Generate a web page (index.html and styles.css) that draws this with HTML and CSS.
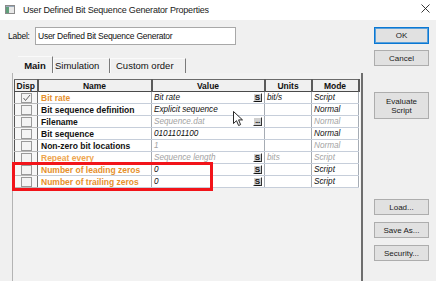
FILE: index.html
```html
<!DOCTYPE html>
<html>
<head>
<meta charset="utf-8">
<link rel="stylesheet" href="styles.css">
</head>
<body>
<div class="win">
  <div class="titlebar">
    <svg class="appicon" viewBox="0 0 10 9"><rect x="0.5" y="0.5" width="9" height="8" fill="#e8e8e8" stroke="#8a8a8a"/><rect x="1" y="2" width="3" height="6" fill="#5f9f7a"/><rect x="1" y="1" width="8" height="1" fill="#9ab"/></svg>
    <span class="title">User Defined Bit Sequence Generator Properties</span>
    <svg class="close" viewBox="0 0 9 9"><path d="M0.5 0.5 L8.5 8.5 M8.5 0.5 L0.5 8.5" stroke="#222" stroke-width="0.9"/></svg>
  </div>
  <div class="body">
    <div class="main">
      <div class="labelrow">
        <span class="lbl">Label:</span>
        <div class="input">User Defined Bit Sequence Generator</div>
      </div>
      <div class="tabs">
        <div class="tab sel">Main</div>
        <div class="tab sim">Simulation</div>
        <div class="tab cust">Custom order</div>
      </div>
      <div class="panel">
        <table class="grid">
          <colgroup><col class="c1"><col class="c2"><col class="c3"><col class="c4"><col class="c5"></colgroup>
          <thead>
            <tr><th>Disp</th><th>Name</th><th>Value</th><th>Units</th><th>Mode</th></tr>
          </thead>
          <tbody>
            <tr>
              <td class="disp"><span class="cb checked"><svg viewBox="0 0 9 8"><path d="M1.5 4 L3.5 6.5 L8 1" fill="none" stroke="#555" stroke-width="0.9"/></svg></span></td>
              <td class="nm orange">Bit rate</td>
              <td class="val"><div class="vc"><span>Bit rate</span><span class="sbtn">S</span></div></td>
              <td class="it">bit/s</td>
              <td class="it">Script</td>
            </tr>
            <tr>
              <td class="disp"><span class="cb"></span></td>
              <td class="nm">Bit sequence definition</td>
              <td class="val"><div class="vc"><span>Explicit sequence</span></div></td>
              <td class="it"></td>
              <td class="it">Normal</td>
            </tr>
            <tr>
              <td class="disp"><span class="cb"></span></td>
              <td class="nm">Filename</td>
              <td class="val grey"><div class="vc"><span>Sequence.dat</span><span class="sbtn dots">...</span></div></td>
              <td class="it"></td>
              <td class="it grey">Normal</td>
            </tr>
            <tr>
              <td class="disp"><span class="cb"></span></td>
              <td class="nm">Bit sequence</td>
              <td class="val"><div class="vc"><span>0101101100</span></div></td>
              <td class="it"></td>
              <td class="it">Normal</td>
            </tr>
            <tr>
              <td class="disp"><span class="cb"></span></td>
              <td class="nm">Non-zero bit locations</td>
              <td class="val grey"><div class="vc"><span>1</span></div></td>
              <td class="it"></td>
              <td class="it grey">Normal</td>
            </tr>
            <tr>
              <td class="disp"><span class="cb"></span></td>
              <td class="nm orange light">Repeat every</td>
              <td class="val grey"><div class="vc"><span>Sequence length</span><span class="sbtn">S</span></div></td>
              <td class="it grey">bits</td>
              <td class="it grey">Script</td>
            </tr>
            <tr>
              <td class="disp"><span class="cb"></span></td>
              <td class="nm orange">Number of leading zeros</td>
              <td class="val"><div class="vc"><span>0</span><span class="sbtn">S</span></div></td>
              <td class="it"></td>
              <td class="it">Script</td>
            </tr>
            <tr>
              <td class="disp"><span class="cb"></span></td>
              <td class="nm orange">Number of trailing zeros</td>
              <td class="val"><div class="vc"><span>0</span><span class="sbtn">S</span></div></td>
              <td class="it"></td>
              <td class="it">Script</td>
            </tr>
          </tbody>
        </table>
      </div>
    </div>
    <div class="buttons">
      <div class="btn ok">OK</div>
      <div class="btn cancel">Cancel</div>
      <div class="btn eval">Evaluate<br>Script</div>
      <div class="btn load">Load...</div>
      <div class="btn save">Save As...</div>
      <div class="btn sec">Security...</div>
    </div>
  </div>
  <div class="highlight"></div>
  <svg class="cursor" viewBox="0 0 11 16"><path d="M0.5 0.5 L0.5 12.5 L3.5 9.7 L5.6 14.5 L7.6 13.6 L5.6 8.9 L9.5 8.9 Z" fill="#fff" stroke="#111" stroke-width="0.9" stroke-linejoin="round"/></svg>
</div>
</body>
</html>
```
FILE: styles.css
```css
* { box-sizing: border-box; }
html, body { margin: 0; padding: 0; }
body {
  width: 436px;
  height: 281px;
  overflow: hidden;
  font-family: "Liberation Sans", Arial, sans-serif;
  color: #111;
}
.win {
  position: relative;
  width: 436px;
  height: 281px;
  background: #f0f0f0;
  overflow: hidden;
}
.titlebar {
  height: 20px;
  background: #fff;
  display: flex;
  align-items: center;
  padding-left: 5px;
}
.appicon { width: 10px; height: 9px; margin-right: 8px; margin-top: -2px; }
.title { font-size: 9px; letter-spacing: -0.2px; color: #1a1a1a; margin-top: -1px; }
.close { margin-left: auto; margin-right: 6px; width: 9px; height: 9px; margin-top: -3px; }

.body { display: flex; height: 261px; }
.main { width: 364px; }

.labelrow {
  display: flex;
  align-items: center;
  margin-top: 7px;
  height: 18px;
  padding-left: 8px;
  font-size: 8.5px;
  letter-spacing: -0.25px;
}
.lbl { width: 27px; }
.input {
  width: 201px;
  height: 18px;
  border: 1px solid #a8a8a8;
  background: #fff;
  padding-left: 2px;
  display: flex;
  align-items: center;
}

.tabs {
  display: flex;
  margin-top: 11px;
  padding-left: 18px;
  height: 17px;
  align-items: flex-end;
}
.tab {
  font-size: 9.5px;
  height: 15px;
  line-height: 14px;
  border-right: 1px solid #7a7a7a;
  border-top: 1px solid #fafafa;
  border-left: 1px solid #fafafa;
}
.tab.sel { height: 17px; width: 35px; text-align: center; font-weight: bold; line-height: 17px; border-left: none; }
.tab.sim { width: 57px; padding-left: 1px; }
.tab.cust { width: 76px; padding-left: 5px; }

.panel {
  margin-left: 12px;
  width: 351px;
  height: 208px;
  border-left: 1px solid #b4b4b4;
  border-right: 2px solid #6e6e6e;
  padding: 6px 0 0 1px;
  background: #f2f2f2;
}

.grid {
  border-collapse: collapse;
  table-layout: fixed;
  width: 344px;
  background: #fff;
  border-left: 1px solid #555;
  border-right: 1px solid #777;
}
.c1 { width: 23px; }
.c2 { width: 114px; }
.c3 { width: 113px; }
.c4 { width: 47px; }
.c5 { width: 47px; }
.grid tr { height: 12px; }
.grid th {
  font-size: 8.5px;
  font-weight: bold;
  background: #f0f0f0;
  padding: 0;
  height: 12px;
  line-height: 10px;
  border-top: 1px solid #6a6a6a;
  border-bottom: 1px solid #4a4a4a;
  border-right: 2px solid #5a5a5a;
  text-align: center;
  color: #111;
}
.grid td {
  padding: 0 0 0 2px;
  height: 12px;
  line-height: 10px;
  font-size: 8.2px;
  border-bottom: 1px solid #c6ceda;
  border-right: 1px solid #a6acb4;
  white-space: nowrap;
  overflow: hidden;
}
.grid td.disp {
  padding: 0;
  border-right: 1px solid #707070;
  border-bottom: 1px solid #b8b8b8;
  background: #f7f7f7;
  text-align: center;
}
.cb {
  display: block;
  margin: 0 auto;
  width: 11px;
  height: 10px;
  border: 1px solid #9a9a9a;
  background: #f4f4f4;
}
.cb svg { width: 9px; height: 8px; display: block; }
.grid td.nm {
  font-weight: bold;
  font-size: 8.5px;
  padding-left: 3px;
  color: #111;
}
.grid td.nm.orange { color: #e6902c; }
.grid td.nm.orange.light { color: #eea54e; }
.grid td.it, .grid td.val { font-style: italic; }
.grid td.val { padding-right: 2px; }
.grey, .grid td.grey { color: #a3a3a3; }
.vc {
  display: flex;
  align-items: center;
  justify-content: space-between;
  height: 10px;
}
.sbtn {
  font-style: normal;
  font-weight: bold;
  font-size: 8px;
  text-decoration: underline;
  width: 9px;
  height: 9px;
  line-height: 8px;
  text-align: center;
  background: #cfcfcf;
  border-top: 1px solid #fff;
  border-left: 1px solid #fff;
  border-right: 1px solid #333;
  border-bottom: 1px solid #333;
  color: #111;
  flex: none;
}
.sbtn.dots { text-decoration: none; letter-spacing: -0.5px; line-height: 6px; font-size: 7px; }

.buttons {
  margin-left: 10px;
  width: 55px;
  display: flex;
  flex-direction: column;
}
.btn {
  height: 16px;
  border: 1px solid #adadad;
  background: #e1e1e1;
  font-size: 8px;
  display: flex;
  align-items: center;
  justify-content: center;
  text-align: center;
  line-height: 9px;
  color: #1a1a1a;
}
.btn.ok { margin-top: 7px; height: 17px; border: 1px solid #0a78d4; box-shadow: inset 0 0 0 1px #5aa0da; }
.btn.cancel { margin-top: 6px; }
.btn.eval { margin-top: 26px; height: 27px; }
.btn.load { margin-top: 80px; }
.btn.save { margin-top: 7px; }
.btn.sec { margin-top: 7px; }

.highlight {
  position: absolute;
  left: 12px;
  top: 162px;
  width: 201px;
  height: 29px;
  border: 3px solid #f2141a;
}
.cursor {
  position: absolute;
  left: 233px;
  top: 111px;
  width: 11px;
  height: 16px;
}
```
